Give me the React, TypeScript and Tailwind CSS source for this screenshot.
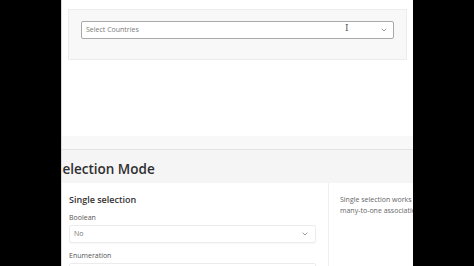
import { ChevronDown } from "lucide-react"

const font = { fontFamily: '"Open Sans", "Noto Sans", sans-serif' }

function Select({ value }: { value: string }) {
  return (
    <div className="flex h-[18px] items-center justify-between rounded-[2px] border border-[#ececec] bg-white pl-[4px] pr-[6px] shadow-[0_1px_1px_rgba(0,0,0,0.03)]">
      <span className="text-[7px] text-[#777]">{value}</span>
      <ChevronDown className="h-[8px] w-[8px] text-[#666]" strokeWidth={2} />
    </div>
  )
}

export default function App() {
  return (
    <div className="flex h-[266px] w-[474px] overflow-hidden bg-black" style={font}>
      <div className="w-[61px] shrink-0" />
      <div className="flex w-[352px] shrink-0 flex-col overflow-hidden border-l border-[#d8d8d8] bg-white">
        {/* top widget area */}
        <div className="h-[136px] shrink-0 px-[6px] pt-[9px]">
          <div className="h-[51px] border border-[#ececec] bg-[#f8f8f8] px-[12px] pt-[11px]">
            <div className="relative flex h-[18px] items-center justify-between rounded-[2px] border border-[#a9a9a9] bg-white pl-[4px] pr-[5px]">
              <span className="text-[7px] text-[#7a7a7a]">Select Countries</span>
              <span className="absolute left-[263px] top-[2px] text-[9px] leading-none text-[#555]" style={{ fontFamily: '"DejaVu Serif", serif' }}>
                I
              </span>
              <ChevronDown className="h-[8px] w-[8px] text-[#666]" strokeWidth={2} />
            </div>
          </div>
        </div>
        <div className="h-[14px] shrink-0 border-b border-[#e3e3e3] bg-[#f8f8f8]" />
        {/* heading band */}
        <div className="flex h-[33px] shrink-0 items-center bg-[#f5f5f5]">
          <h2 className="-ml-[7px] mt-[6px] whitespace-nowrap text-[13.5px] font-semibold text-[#2f2f2f]">Selection Mode</h2>
        </div>
        {/* content */}
        <div className="flex flex-1">
          <div className="w-[267px] shrink-0 border-r border-[#f0f0f0] pl-[7px] pr-[12px] pt-[10px]">
            <h3 className="text-[9px] font-semibold leading-[14px] text-[#333]">Single selection</h3>
            <div className="mt-[6px] text-[7px] leading-[10px] text-[#555]">Boolean</div>
            <div className="mt-[2px]">
              <Select value="No" />
            </div>
            <div className="mt-[8px] text-[7px] leading-[10px] text-[#555]">Enumeration</div>
            <div className="mt-[2px] h-[18px] rounded-[2px] border border-[#ececec]" />
          </div>
          <div className="flex-1 whitespace-nowrap pl-[11px] pt-[11px] text-[7px] leading-[11px] text-[#666]">
            <p>Single selection works</p>
            <p>many-to-one associations</p>
          </div>
        </div>
      </div>
      <div className="flex-1" />
    </div>
  )
}
